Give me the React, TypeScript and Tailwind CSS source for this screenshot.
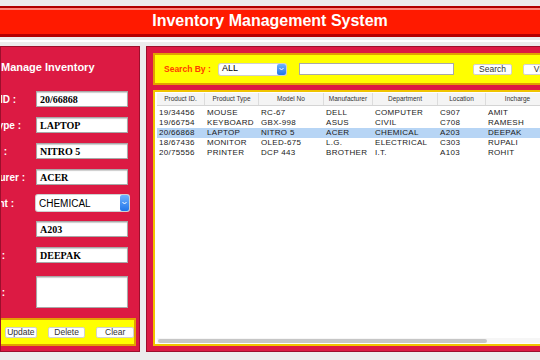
const rows = [
  ['19/34456', 'MOUSE', 'RC-67', 'DELL', 'COMPUTER', 'C907', 'AMIT'],
  ['19/66754', 'KEYBOARD', 'GBX-998', 'ASUS', 'CIVIL', 'C708', 'RAMESH'],
  ['20/66868', 'LAPTOP', 'NITRO 5', 'ACER', 'CHEMICAL', 'A203', 'DEEPAK'],
  ['18/67436', 'MONITOR', 'OLED-675', 'L.G.', 'ELECTRICAL', 'C303', 'RUPALI'],
  ['20/75556', 'PRINTER', 'DCP 443', 'BROTHER', 'I.T.', 'A103', 'ROHIT']
]

const headers = ['Product ID.', 'Product Type', 'Model No', 'Manufacturer', 'Department', 'Location', 'Incharge']

// label visible width = where the clipped label ends on the left edge
const fields = [
  { label: 'Product ID :', end: 'w-[15px]', value: '20/66868' },
  { label: 'Product Type :', end: 'w-[20px]', value: 'LAPTOP' },
  { label: 'Model No :', end: 'w-[6px]', value: 'NITRO 5' },
  { label: 'Manufacturer :', end: 'w-[24px]', value: 'ACER' }
]

const fields2 = [
  { label: 'Location :', end: 'w-[0px]', value: 'A203' },
  { label: 'Incharge :', end: 'w-[4px]', value: 'DEEPAK' }
]

const Arrow = () => (
  <span className="flex h-full w-[9px] items-center justify-center rounded-[2px] bg-gradient-to-b from-[#6fb2ff] to-[#1f74e8]">
    <svg width="5" height="4" viewBox="0 0 5 4">
      <path d="M0.5 1 L2.5 3 L4.5 1" stroke="white" strokeWidth="1" fill="none" />
    </svg>
  </span>
)

const Label = ({ text, end }: { text: string; end: string }) => (
  <div className="flex w-[35px] shrink-0">
    <div className={`${end} flex justify-end overflow-hidden whitespace-nowrap text-[10px] font-bold text-white`}>
      {text}
    </div>
  </div>
)

const TextField = ({ value }: { value: string }) => (
  <div className="flex h-[16px] w-[92px] items-center border border-[#a8a8a8] bg-white pl-[3px] font-['Liberation_Serif',serif] text-[10px] font-bold text-black shadow-[inset_0_1px_1px_#ccc]">
    {value}
  </div>
)

const Btn = ({ text, w }: { text: string; w: string }) => (
  <div className={`${w} flex h-[11px] items-center justify-center rounded-[2px] border border-[#d0d0d0] bg-white text-[8.5px] text-[#333]`}>
    {text}
  </div>
)

export default function App() {
  return (
    <div className="h-[360px] w-[540px] overflow-hidden bg-[#ececec] font-['Liberation_Sans',Arial,sans-serif]">
      <div className="mt-[6px] flex h-[31px] items-center justify-center border-t-[2px] border-b-[3px] border-t-[#b00000] border-b-[#b30000] bg-[#ff1a00] text-[16px] font-bold text-white shadow-[inset_0_2px_0_#ff8478]">
        Inventory Management System
      </div>
      <div className="mt-[3px] h-[2px] bg-white" />
      <div className="mt-[4px] flex h-[306px] gap-[6px]">
        {/* left panel */}
        <div className="flex w-[140px] shrink-0 flex-col overflow-hidden border border-[#9c0f2c] bg-[#dc1a43]">
          <div className="mt-[13px] h-[15px] whitespace-nowrap text-[11px] font-bold leading-[15px] text-white">
            Manage Inventory
          </div>
          <div className="mt-[16px] flex flex-col gap-[10px]">
            {fields.map((f) => (
              <div key={f.label} className="flex h-[16px] items-center">
                <Label text={f.label} end={f.end} />
                <TextField value={f.value} />
              </div>
            ))}
            <div className="flex h-[16px] items-center">
              <Label text="Department :" end="w-[13px]" />
              <div className="flex h-[16px] w-[93px] items-center justify-between rounded-[2px] bg-white pl-[3px] text-[10px] text-black shadow-[0_0_0_1px_#d0d0d0]">
                CHEMICAL
                <Arrow />
              </div>
            </div>
            {fields2.map((f) => (
              <div key={f.label} className="flex h-[16px] items-center">
                <Label text={f.label} end={f.end} />
                <TextField value={f.value} />
              </div>
            ))}
          </div>
          <div className="mt-[13px] flex h-[32px] items-center">
            <Label text="Remarks :" end="w-[4px]" />
            <div className="h-[32px] w-[92px] border border-[#a8a8a8] bg-white shadow-[inset_0_1px_1px_#ccc]" />
          </div>
          <div className="mt-[10px] flex h-[28px] w-[135px] items-center gap-[11px] border-2 border-l-0 border-[#e2a100] bg-[#ffff00] pl-[4px]">
            <Btn text="Update" w="w-[33px]" />
            <Btn text="Delete" w="w-[39px]" />
            <Btn text="Clear" w="w-[39px]" />
          </div>
        </div>

        {/* right panel */}
        <div className="flex flex-1 flex-col overflow-hidden border border-[#9c0f2c] border-r-0 bg-[#dc1a43] pl-[6px]">
          <div className="mt-[6px] flex h-[32px] w-[400px] shrink-0 items-center border-2 border-r-0 border-[#e2a100] bg-[#ffff00] pl-[9px]">
            <span className="w-[55px] shrink-0 whitespace-nowrap text-[8.5px] font-bold text-[#ff3c00]">Search By :</span>
            <div className="flex h-[11px] w-[67px] shrink-0 items-center justify-between rounded-[2px] bg-white pl-[3px] text-[9px] text-black shadow-[0_0_0_1px_#d0d0d0]">
              ALL
              <Arrow />
            </div>
            <div className="ml-[13px] h-[12px] w-[155px] shrink-0 border border-[#a8a8a8] bg-white" />
            <div className="ml-[19px] flex h-[11px] w-[39px] shrink-0 items-center justify-center rounded-[2px] border border-[#d0d0d0] bg-white text-[8.5px] text-[#333]">
              Search
            </div>
            <div className="ml-[11px] flex h-[11px] w-[40px] shrink-0 items-center justify-center rounded-[2px] border border-[#d0d0d0] bg-white text-[8.5px] text-[#333]">
              View
            </div>
          </div>
          <div className="mt-[5px] flex h-[256px] w-[400px] flex-col border-2 border-r-0 border-[#f0c400] bg-white pl-[2px] pt-[1px]">
            <div className="grid h-[13px] grid-cols-[48px_54px_65px_49px_65px_48px_64px] border-b border-[#d4d4d4] bg-[#f4f4f4] text-[6.5px] text-[#333]">
              {headers.map((h) => (
                <div key={h} className="flex items-center justify-center whitespace-nowrap border-r border-[#dcdcdc]">
                  {h}
                </div>
              ))}
            </div>
            <div className="mt-[2px] flex flex-col">
              {rows.map((r, i) => (
                <div
                  key={r[0]}
                  className={`grid h-[10px] grid-cols-[48px_54px_65px_49px_65px_48px_64px] text-[8px] leading-[10px] tracking-[0.3px] text-[#1a1a1a] ${
                    i === 2 ? 'bg-[#b7d5f5]' : ''
                  }`}
                >
                  {r.map((c, j) => (
                    <div key={j} className="whitespace-nowrap pl-[2px]">
                      {c}
                    </div>
                  ))}
                </div>
              ))}
            </div>
            <div className="flex-1" />
            <div className="mb-[1px] h-[5px] bg-[#f6f6f6] py-[0.5px] pl-[1px]">
              <div className="h-[4px] w-[329px] rounded-full bg-[#c6c6c6]" />
            </div>
          </div>
        </div>
      </div>
    </div>
  )
}
